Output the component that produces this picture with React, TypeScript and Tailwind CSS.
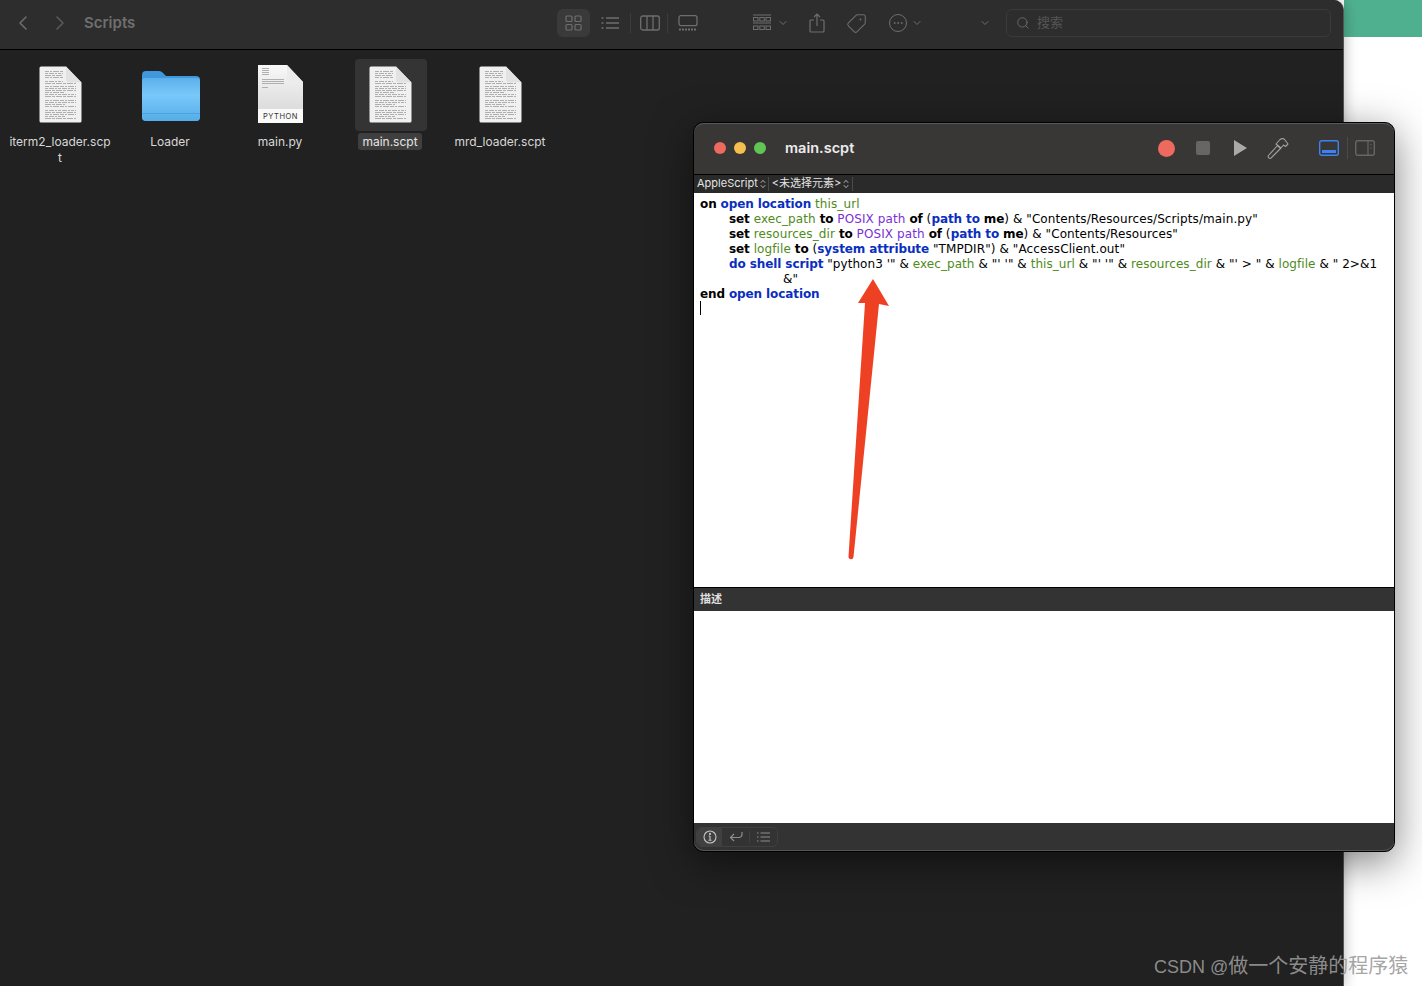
import { ChevronLeft, ChevronRight, ChevronDown, Search, Tag, Ellipsis } from 'lucide-react';

const ui = "font-['Inter','Noto_Sans_CJK_SC',sans-serif]";
const code = "font-['DejaVu_Sans','Noto_Sans_CJK_SC',sans-serif]";

type Tok = [string, string?];

const K = 'font-bold text-black tracking-[-0.100px]';
const B = 'font-bold text-[#0a2fc0] tracking-[-0.100px]';
const V = 'text-[#4f8a1c]';
const P = 'text-[#7a2fd6]';

const script: { indent: number; tight?: boolean; toks: Tok[] }[] = [
  { indent: 0, toks: [['on', K], [' '], ['open location', B], [' '], ['this_url', V]] },
  { indent: 29, toks: [['set', K], [' '], ['exec_path', V], [' '], ['to', K], [' '], ['POSIX path', P], [' '], ['of', K], [' ('], ['path to', B], [' '], ['me', K], [') & "Contents/Resources/Scripts/main.py"']] },
  { indent: 29, toks: [['set', K], [' '], ['resources_dir', V], [' '], ['to', K], [' '], ['POSIX path', P], [' '], ['of', K], [' ('], ['path to', B], [' '], ['me', K], [') & "Contents/Resources"']] },
  { indent: 29, toks: [['set', K], [' '], ['logfile', V], [' '], ['to', K], [' ('], ['system attribute', B], [' "TMPDIR") & "AccessClient.out"']] },
  { indent: 29, tight: true, toks: [['do shell script', B], [' "python3 \'" & '], ['exec_path', V], [' & "\' \'" & '], ['this_url', V], [' & "\' \'" & '], ['resources_dir', V], [' & "\' > " & '], ['logfile', V], [' & " 2>&1']] },
  { indent: 83, toks: [['&"']] },
  { indent: 0, toks: [['end', K], [' '], ['open location', B]] },
];

function DocIcon() {
  const rows = [0, 2, 4, 6, 10, 12, 15, 17, 19, 21, 23, 25, 29, 31, 33, 35, 39, 41, 43, 45, 47];
  return (
    <svg className="-ml-[2px] -mt-[2px]" width="43" height="57" viewBox="0 0 43 57">
      <path d="M2 0.500h25l15.500 16v38.500a1.500 1.500 0 0 1-1.500 1.500H2A1.500 1.500 0 0 1 .5 55V2A1.500 1.500 0 0 1 2 .5z" fill="#f0f0f0" />
      <path d="M27 0.500l15.500 16H30a3 3 0 0 1-3-3z" fill="#e2e2e2" />
      {rows.map((y, i) => (
        <path key={y} d={`M6 ${y + 5.500}h${y < 12 ? 18 : i % 5 === 4 ? 20 : 31}`} stroke="#777" strokeWidth="0.900" strokeDasharray={i % 3 === 0 ? '4 1 2 1 6 1' : i % 3 === 1 ? '3 1 5 1 2 1' : '6 1 3 1'} opacity="0.600" />
      ))}
    </svg>
  );
}

function PyIcon() {
  return (
    <svg className="-ml-[2px] -mt-[2px]" width="45" height="58" viewBox="0 0 45 58">
      <defs>
        <linearGradient id="pyg" x1="0" y1="0" x2="0" y2="1">
          <stop offset="0" stopColor="#f8f8f8" />
          <stop offset="0.700" stopColor="#dedede" />
        </linearGradient>
      </defs>
      <path d="M0 0h29l16 17v41H0z" fill="url(#pyg)" />
      <path d="M29 0l16 17H32a3 3 0 0 1-3-3z" fill="#ececec" />
      <rect x="0" y="44" width="45" height="14" fill="#fafafa" />
      {[3, 5, 7, 9, 14, 16, 18, 22].map((y, i) => (
        <rect key={y} x="4" y={y} width={i < 4 ? 7 : i === 7 ? 6 : 22} height="1" fill="#b0b0b0" />
      ))}
      <text x="22.500" y="54" textAnchor="middle" fontSize="7.500" letterSpacing="0.500" fontFamily="Inter" fill="#333">PYTHON</text>
    </svg>
  );
}

function FolderIcon() {
  return (
    <svg className="mt-[2px]" width="58" height="50" viewBox="0 0 58 50">
      <defs>
        <linearGradient id="fg" x1="0" y1="0" x2="0" y2="1">
          <stop offset="0" stopColor="#5cb0ea" />
          <stop offset="0.400" stopColor="#79c8fa" />
          <stop offset="1" stopColor="#55aee8" />
        </linearGradient>
      </defs>
      <path d="M0 4a4 4 0 0 1 4-4h13c2 0 3 1 4 2l3 3h30a4 4 0 0 1 4 4v37a4 4 0 0 1-4 4H4a4 4 0 0 1-4-4z" fill="#3f97dc" />
      <path d="M0 10a3 3 0 0 1 3-3h52a3 3 0 0 1 3 3v36a4 4 0 0 1-4 4H4a4 4 0 0 1-4-4z" fill="url(#fg)" />
      <rect x="0" y="42" width="58" height="1" fill="#4aa2de" />
    </svg>
  );
}

function FileCell({ name, selected, children }: { name: string; selected?: boolean; children: React.ReactNode }) {
  return (
    <div className="w-[110px] flex flex-col items-center">
      <div className={`ml-[2px] w-[72px] h-[72px] rounded flex items-center justify-center ${selected ? 'bg-[#343434]' : ''}`}>{children}</div>
      <div className={`mt-[3px] w-[103px] text-center text-[12px] leading-[16px] break-all text-[#d8d8d8] ${ui}`}>
        <span className={selected ? 'bg-[#3f3f3f] rounded-[3px] px-[4px] py-[1px] text-[#e6e6e6]' : ''}>{name}</span>
      </div>
    </div>
  );
}

function FinderToolbar() {
  const c = '#6e6e6e';
  return (
    <div className="h-[50px] shrink-0 flex items-center bg-[#2d2d2d] border-b border-black pb-[3px] rounded-tr-[10px]">
      <ChevronLeft size={24} strokeWidth={1.5} color={c} className="ml-[11px]" />
      <ChevronRight size={24} strokeWidth={1.5} color={c} className="ml-[13px] opacity-70" />
      <div className={`ml-[12px] w-[473px] text-[15px] font-semibold text-[#6f6f6f] ${ui}`}>Scripts</div>
      <div className="w-[33px] h-[28px] rounded-md bg-[#3a3a3a] flex items-center justify-center">
        <svg width="17" height="16" viewBox="0 0 17 16" fill="none" stroke={c} strokeWidth="1.200">
          <rect x="1" y="1" width="6" height="5.500" rx="1" />
          <rect x="10" y="1" width="6" height="5.500" rx="1" />
          <rect x="1" y="9.500" width="6" height="5.500" rx="1" />
          <rect x="10" y="9.500" width="6" height="5.500" rx="1" />
        </svg>
      </div>
      <svg className="ml-[11px]" width="18" height="14" viewBox="0 0 18 14" fill="none" stroke={c} strokeWidth="1.300">
        <path d="M5 2h13M5 7h13M5 12h13" />
        <path d="M0.500 2h2M0.500 7h2M0.500 12h2" />
      </svg>
      <div className="ml-[11px] w-px h-[20px] bg-[#3c3c3c]" />
      <svg className="ml-[9px]" width="20" height="16" viewBox="0 0 20 16" fill="none" stroke={c} strokeWidth="1.300">
        <rect x="0.700" y="1" width="18.600" height="14" rx="2" />
        <path d="M7 1v14M13 1v14" />
      </svg>
      <div className="ml-[7px] w-px h-[20px] bg-[#3c3c3c]" />
      <svg className="ml-[10px]" width="20" height="16" viewBox="0 0 20 16" fill="none" stroke={c} strokeWidth="1.300">
        <rect x="1" y="0.700" width="18" height="10" rx="2" />
        <path d="M1 14.500h18" strokeWidth="2" strokeDasharray="2 1" />
      </svg>
      <svg className="ml-[54px]" width="20" height="18" viewBox="0 0 20 18" fill="none" stroke={c} strokeWidth="1">
        <path d="M1 1h18M1 9h18" strokeWidth="1.200" />
        <rect x="1.500" y="3.500" width="4.500" height="3.500" />
        <rect x="7.800" y="3.500" width="4.500" height="3.500" />
        <rect x="14" y="3.500" width="4.500" height="3.500" />
        <rect x="1.500" y="12" width="4.500" height="3.500" />
        <rect x="7.800" y="12" width="4.500" height="3.500" />
        <rect x="14" y="12" width="4.500" height="3.500" />
      </svg>
      <ChevronDown size={12} strokeWidth={2} color={c} className="ml-[5px]" />
      <svg className="ml-[20px]" width="16" height="20" viewBox="0 0 16 20" fill="none" stroke={c} strokeWidth="1.200">
        <path d="M5 7H2a1 1 0 0 0-1 1v10a1 1 0 0 0 1 1h12a1 1 0 0 0 1-1V8a1 1 0 0 0-1-1h-3" />
        <path d="M8 13V1M5 4l3-3 3 3" />
      </svg>
      <Tag size={21} strokeWidth={1.200} color={c} className="ml-[21px] rotate-90" />
      <div className="ml-[22px] w-[18px] h-[18px] rounded-full border border-[#6e6e6e] flex items-center justify-center">
        <Ellipsis size={12} color={c} />
      </div>
      <ChevronDown size={12} strokeWidth={2} color={c} className="ml-[4px]" />
      <ChevronDown size={12} strokeWidth={2} color={c} className="ml-[56px]" />
      <div className="ml-[15px] w-[325px] h-[28px] rounded-md border border-[#3a3a3a] flex items-center pl-[9px]">
        <Search size={14} strokeWidth={1.500} color={c} />
        <span className={`ml-[7px] text-[13px] text-[#555555] ${ui}`}>搜索</span>
      </div>
    </div>
  );
}

function ScriptTitleBar() {
  return (
    <div className="h-[51px] shrink-0 flex items-center bg-[#383736] rounded-t-[10px] border-t border-[#5a5a5a] pl-[20px] pb-[2px]">
      <div className="w-[12px] h-[12px] rounded-full bg-[#ec6a5e]" />
      <div className="ml-[8px] w-[12px] h-[12px] rounded-full bg-[#f4bf4f]" />
      <div className="ml-[8px] w-[12px] h-[12px] rounded-full bg-[#61c554]" />
      <div className={`ml-[19px] w-[373px] text-[14.500px] font-semibold text-[#ececec] ${ui}`}>main.scpt</div>
      <div className="w-[17px] h-[17px] rounded-full bg-[#ee6a5f]" />
      <div className="ml-[21px] w-[14px] h-[14px] rounded-[2px] bg-[#666666]" />
      <svg className="ml-[24px]" width="13" height="16" viewBox="0 0 13 16"><path d="M0 0l13 8-13 8z" fill="#a9a9a9" /></svg>
      <svg className="ml-[20px]" width="22" height="22" viewBox="0 0 22 22" fill="none" stroke="#a0a0a0" strokeWidth="1.100" strokeLinejoin="round">
        <path d="M1.500 18.500L10.500 8.500l3 3L4 21a1.800 1.800 0 0 1-2.500-2.500z" />
        <path d="M9 7l4-4.500C15 1 17 1.500 18 3l3 4-2.500 2.500-2-1.500-2.500 3z" />
      </svg>
      <svg className="ml-[30px]" width="20" height="16" viewBox="0 0 20 16" fill="none">
        <rect x="0.700" y="0.700" width="18.600" height="14.600" rx="2" stroke="#3b82f6" strokeWidth="1.400" />
        <rect x="3" y="10" width="14" height="3" fill="#3b82f6" />
      </svg>
      <div className="ml-[8px] w-px h-[22px] bg-[#4a4a4a]" />
      <svg className="ml-[7px]" width="20" height="16" viewBox="0 0 20 16" fill="none">
        <rect x="0.700" y="0.700" width="18.600" height="14.600" rx="2" stroke="#666" strokeWidth="1.400" />
        <path d="M13 1v14" stroke="#666" strokeWidth="1.200" />
        <path d="M16 4v1.500M16 7.500V9" stroke="#666" />
      </svg>
    </div>
  );
}

function UpDown() {
  return (
    <svg className="ml-[2px]" width="6" height="10" viewBox="0 0 6 10" fill="none" stroke="#bdbdbd" strokeWidth="0.900">
      <path d="M0.800 3.800L3 1.300l2.200 2.500M0.800 6.200L3 8.700l2.200-2.500" />
    </svg>
  );
}

function NavBar() {
  return (
    <div className={`h-[19px] shrink-0 flex items-center bg-[#2a2a2a] border-t border-black text-[11px] text-[#e4e4e4] pl-[3px] pb-[1px] ${ui}`}>
      <span>AppleScript</span>
      <UpDown />
      <div className="ml-[2px] w-px h-[14px] bg-[#4a4a4a]" />
      <span className="ml-[3px]">&lt;未选择元素&gt;</span>
      <UpDown />
      <div className="ml-[3px] w-px h-[14px] bg-[#4a4a4a]" />
    </div>
  );
}

function ScriptEditor() {
  return (
    <div className={`h-[394px] shrink-0 bg-white pt-[4px] pl-[6px] text-[12px] leading-[15px] text-black ${code}`}>
      {script.map((line, i) => (
        <div key={i} className={`whitespace-pre ${line.tight ? 'tracking-[0.060px]' : 'tracking-[0.100px]'}`} style={{ paddingLeft: line.indent }}>
          {line.toks.map(([t, cls], j) => (
            <span key={j} className={cls}>{t}</span>
          ))}
        </div>
      ))}
      <div className="-mt-[1px] w-px h-[14px] bg-black" />
    </div>
  );
}

function BottomBar() {
  const c = '#8d8d8d';
  return (
    <div className="h-[28px] shrink-0 flex items-center bg-[#333333] rounded-b-[10px] pl-[2px] shadow-[inset_0_-1px_0_#555555]">
      <div className="h-[20px] flex items-center rounded-[5px] border border-[#404040]">
        <div className="w-[25px] h-full flex items-center justify-center bg-[#404040] rounded-l-[5px]">
          <svg width="14" height="14" viewBox="0 0 14 14" fill="none" stroke="#c4c4c4" strokeWidth="1.100">
            <circle cx="7" cy="7" r="6" />
            <path d="M7 6v4M5.500 10.300h3M5.800 6h1.200" />
            <circle cx="7" cy="3.900" r="0.500" fill="#c4c4c4" />
          </svg>
        </div>
        <div className="w-[28px] flex justify-center border-r border-[#404040]">
          <svg width="14" height="12" viewBox="0 0 14 12" fill="none" stroke={c} strokeWidth="1.200">
            <path d="M13 1v2.500a3 3 0 0 1-3 3H1.500M5 3L1.500 6.500 5 10" />
          </svg>
        </div>
        <div className="w-[27px] flex justify-center">
          <svg width="13" height="10" viewBox="0 0 13 10" fill="none" stroke={c} strokeWidth="1.100">
            <path d="M3.500 1H13M3.500 5H13M3.500 9H13M0 1h1.500M0 5h1.500M0 9h1.500" />
          </svg>
        </div>
      </div>
    </div>
  );
}

export default function App() {
  return (
    <div className="relative w-[1422px] h-[986px] overflow-hidden bg-white flex">
      <div className="w-[1344px] h-full flex flex-col bg-[#212121] border-r border-[#555555] rounded-tr-[10px] shadow-[0_0_14px_rgba(0,0,0,0.3)] z-10">
        <FinderToolbar />
        <div className="flex pt-[9px] pl-[5px]">
          <FileCell name="iterm2_loader.scpt"><DocIcon /></FileCell>
          <FileCell name="Loader"><FolderIcon /></FileCell>
          <FileCell name="main.py"><PyIcon /></FileCell>
          <FileCell name="main.scpt" selected><DocIcon /></FileCell>
          <FileCell name="mrd_loader.scpt"><DocIcon /></FileCell>
        </div>
      </div>
      <div className="flex-1 h-[37px] bg-[#4fb08f]" />

      {/* script editor window floats over the finder */}
      <div className="absolute z-20 left-[693px] top-[122px] w-[702px] h-[730px] flex flex-col rounded-[10px] border border-black bg-[#333333] shadow-[0_10px_40px_rgba(0,0,0,0.5)]">
        <ScriptTitleBar />
        <NavBar />
        <ScriptEditor />
        <div className={`h-[24px] shrink-0 flex items-center bg-[#333333] border-t border-black pl-[6px] text-[11px] font-semibold text-[#e0e0e0] ${ui}`}>描述</div>
        <div className="h-[212px] shrink-0 bg-white" />
        <BottomBar />
      </div>

      {/* annotation arrow */}
      <svg className="absolute z-30 left-[840px] top-[270px]" width="60" height="295" viewBox="0 0 60 295">
        <path d="M33 9L49 36 39 34 13.500 287a2.500 2.500 0 0 1-5-.5L25 33 18 33z" fill="#ee4124" />
      </svg>

      <div className={`absolute z-40 left-[1154px] top-[952px] text-[20px] leading-[28px] text-[#9a9a9a]/90 font-['Liberation_Sans','Noto_Sans_CJK_SC',sans-serif]`}>
        <span className="text-[18px]">CSDN @</span>做一个安静的程序猿
      </div>
    </div>
  );
}
